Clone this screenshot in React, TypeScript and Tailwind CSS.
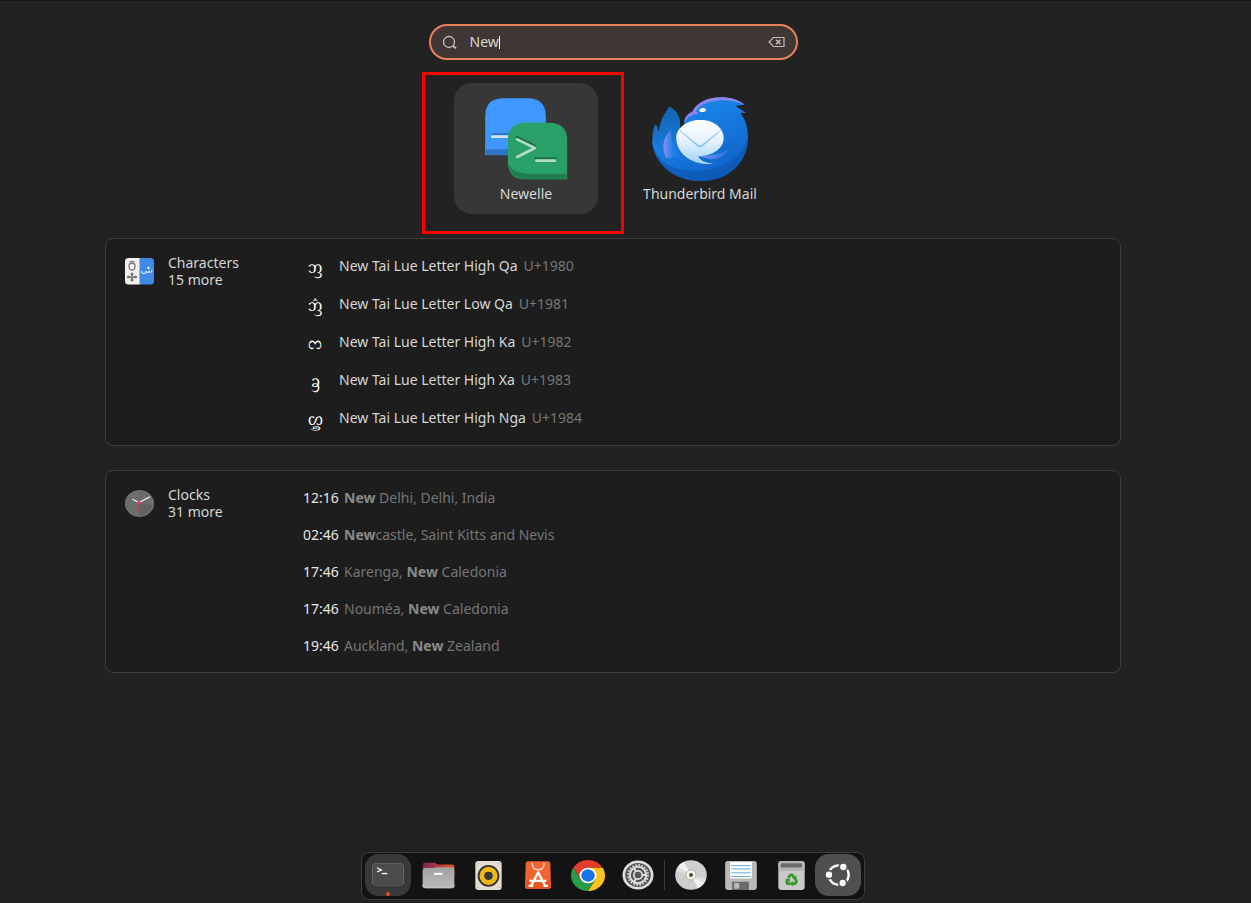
import type { ReactNode } from "react";
import { clsx } from "clsx";

const characters = [
  { glyph: "ᦀ", name: "New Tai Lue Letter High Qa", code: "U+1980" },
  { glyph: "ᦁ", name: "New Tai Lue Letter Low Qa", code: "U+1981" },
  { glyph: "ᦂ", name: "New Tai Lue Letter High Ka", code: "U+1982" },
  { glyph: "ᦃ", name: "New Tai Lue Letter High Xa", code: "U+1983" },
  { glyph: "ᦄ", name: "New Tai Lue Letter High Nga", code: "U+1984" },
];

const clocks = [
  { time: "12:16", before: "", after: " Delhi, Delhi, India" },
  { time: "02:46", before: "", after: "castle, Saint Kitts and Nevis" },
  { time: "17:46", before: "Karenga, ", after: " Caledonia" },
  { time: "17:46", before: "Nouméa, ", after: " Caledonia" },
  { time: "19:46", before: "Auckland, ", after: " Zealand" },
];

function NewelleIcon() {
  return (
    <svg viewBox="210 99 248 246" className="h-[82px] w-[83px]" aria-hidden="true">
      <path d="M210 270V155q0-55 55-55h72q55 0 55 55v115z" fill="#3f98ff" />
      <path d="M212 253h100v18H212z" fill="#2f74c4" />
      <path d="M229 208h60" stroke="#2f74c4" strokeWidth="7" />
      <path d="M231 215h60" stroke="#cfe3fb" strokeWidth="8" strokeLinecap="round" />
      <path d="M278 289v-62q0-54 54-54h70q54 0 54 54v116H332q-54 0-54-54z" fill="#28a067" />
      <path d="M280 300q8 43 54 43h121v-17H334q-38 0-54-26z" fill="#1f7d50" />
      <path d="M305 216l56 27" stroke="#1b6f47" strokeWidth="7" strokeLinecap="round" />
      <path d="M362 280h58" stroke="#1b6f47" strokeWidth="7" strokeLinecap="round" />
      <path d="M306 223l53 26-53 27" fill="none" stroke="#b3dcc8" strokeWidth="8" strokeLinecap="round" strokeLinejoin="round" />
      <path d="M364 287h55" stroke="#b3dcc8" strokeWidth="8" strokeLinecap="round" />
    </svg>
  );
}

function ThunderbirdIcon() {
  return (
    <svg viewBox="50 50 288 252" className="h-[84px] w-24" aria-hidden="true">
      <defs>
        <linearGradient id="tb-body" x1="0" y1="0" x2="0.6" y2="1">
          <stop offset="0" stopColor="#1f8df2" />
          <stop offset="0.6" stopColor="#1577de" />
          <stop offset="1" stopColor="#0f62c6" />
        </linearGradient>
        <linearGradient id="tb-tail" x1="0" y1="0" x2="0" y2="1">
          <stop offset="0" stopColor="#1263b4" />
          <stop offset="1" stopColor="#1a80e6" />
        </linearGradient>
        <linearGradient id="tb-bubble" x1="0" y1="0" x2="0" y2="1">
          <stop offset="0" stopColor="#ffffff" />
          <stop offset="0.5" stopColor="#e2f1fe" />
          <stop offset="1" stopColor="#9ed2fb" />
        </linearGradient>
        <linearGradient id="tb-feather" x1="0" y1="0" x2="1" y2="0">
          <stop offset="0" stopColor="#8f8cf0" />
          <stop offset="0.6" stopColor="#1c80e6" />
        </linearGradient>
        <linearGradient id="tb-wing" x1="0" y1="0" x2="1" y2="0">
          <stop offset="0" stopColor="#8791f5" />
          <stop offset="1" stopColor="#1c6fdd" />
        </linearGradient>
      </defs>
      <path d="M60 131q6 6 11 24c2-32 14-51 31-77 22 13 36 33 32 62l7 84-58 20C48 216 45 165 60 131z" fill="url(#tb-tail)" />
      <path d="M147 128c0-18 10-28 24-34 14-28 46-43 86-43 28 0 50 7 71 22l-28 4q15 8 32 21l-18-1c16 17 24 45 24 73 0 76-57 132-141 132-79 0-141-50-147-124l34 40 60-60z" fill="url(#tb-body)" />
      <path d="M50 182c8 57 58 90 128 90 85 0 138-37 160-97-1 71-58 127-140 127S50 251 50 182z" fill="#0b4fa6" opacity="0.5" />
      <path d="M147 128c0-18 10-28 24-34 14-28 46-43 86-43 28 0 50 7 71 22-40-15-70-16-104-8-20 5-34 14-42 27l6 9c-18 1-31 9-41 27z" fill="#8c83ec" />
      <path d="M93 234c-16-31-10-65 14-85 0 30 6 54 26 80z" fill="url(#tb-feather)" />
      <ellipse cx="202" cy="89" rx="10" ry="6" fill="#fff" transform="rotate(-10 202 89)" />
      <path d="M186 226c40 2 72-4 98-23-10 24-34 36-64 32z" fill="url(#tb-wing)" />
      <path d="M195 119c40 0 70 23 70 54 0 28-26 53-76 55 5 12 20 20 46 22-64 8-112-30-112-77 0-31 32-54 72-54z" fill="url(#tb-bubble)" />
      <path d="M133 150l54 43q7 6 14 0l56-43-56 48q-7 6-14 0z" fill="#7db9ee" stroke="#a3cdf2" strokeWidth="3" />
    </svg>
  );
}

function CharactersIcon() {
  return (
    <svg viewBox="0 0 29 27" className="h-[27px] w-[29px]" aria-hidden="true">
      <path d="M3.500 0H15v26.500H3.500Q0 26.500 0 23V3.500Q0 0 3.500 0z" fill="#f3f2f0" />
      <path d="M14.500 0h11Q29 0 29 3.500V23q0 3.500-3.500 3.500h-11z" fill="#3e8ae6" />
      <ellipse cx="7" cy="8.500" rx="3" ry="3.500" fill="none" stroke="#777" strokeWidth="1.300" />
      <path d="M4.500 3.500h5" stroke="#777" strokeWidth="1" />
      <path d="M3 19h8M7 15.500v7" stroke="#777" strokeWidth="1.600" />
      <g fill="#777">
        <circle cx="3.500" cy="19" r="1.600" />
        <circle cx="10.500" cy="19" r="1.600" />
        <circle cx="7" cy="16" r="1.600" />
        <circle cx="7" cy="22" r="1.600" />
      </g>
      <path d="M16.500 13.500q0 2.500 2.500 2.200 2.200-.2 2.200-2.700 0 1.500 1.500 1.500t1.500-1.500q0 1.500 1.400 1.500t1.400-2.500M22.500 10h2M23.500 9v2" fill="none" stroke="#fff" strokeWidth="1" strokeLinecap="round" />
    </svg>
  );
}

function ClocksIcon() {
  return (
    <svg viewBox="0 0 29 27" className="h-[27px] w-[29px]" aria-hidden="true">
      <ellipse cx="14.500" cy="13.500" rx="14.300" ry="13" fill="#6c6c6c" stroke="#7c7c7c" strokeWidth="0.800" />
      <path d="M14 12.500l14 3A14 13 0 0 1 14.500 26z" fill="#626262" />
      <path d="M8 9.500l6 3 10.500-5.500" fill="none" stroke="#f2f2f2" strokeWidth="1.300" strokeLinecap="round" />
      <path d="M14 12v10.500" stroke="#d73347" strokeWidth="1.200" />
      <circle cx="14" cy="12.500" r="1.600" fill="#e63a4f" />
    </svg>
  );
}

function TerminalIcon() {
  return (
    <svg viewBox="50 51 96 76" className="h-[25px] w-8" aria-hidden="true">
      <rect x="51" y="52" width="94" height="74" rx="10" fill="#4b4b4b" stroke="#6a6a6a" strokeWidth="3" />
      <path d="M51 116q0 9 10 9h74q10 0 10-9" fill="none" stroke="#303030" strokeWidth="4" />
      <path d="M65 66l13 6-13 6" fill="none" stroke="#eee" strokeWidth="4" />
      <path d="M79 83h17" stroke="#fff" strokeWidth="4" />
    </svg>
  );
}

function FilesIcon() {
  return (
    <svg viewBox="198 50 100 80" className="h-[27px] w-[33px]" aria-hidden="true">
      <defs>
        <linearGradient id="files-back" x1="0" y1="0" x2="1" y2="0">
          <stop offset="0" stopColor="#7b2454" />
          <stop offset="1" stopColor="#e95420" />
        </linearGradient>
        <linearGradient id="files-front" x1="0" y1="0" x2="0" y2="1">
          <stop offset="0" stopColor="#a2a2a2" />
          <stop offset="1" stopColor="#bababa" />
        </linearGradient>
      </defs>
      <path d="M200 58q0-7 7-7h30q4 0 8 6h44q7 0 7 7v30h-96z" fill="url(#files-back)" />
      <path d="M200 74q0-7 7-7h28q4 0 9-2h45q7 0 7 7v48q0 8-8 8h-80q-8 0-8-8z" fill="url(#files-front)" />
      <path d="M200 118q0 10 8 10h80q8 0 8-10" fill="none" stroke="#d8d8d8" strokeWidth="2" />
      <path d="M235 85h25" stroke="#fff" strokeWidth="6" />
    </svg>
  );
}

function RhythmboxIcon() {
  return (
    <svg viewBox="357 45 80 88" className="h-[29px] w-[27px]" aria-hidden="true">
      <rect x="357" y="45" width="80" height="88" rx="9" fill="#e3ddd2" />
      <circle cx="397" cy="90" r="33" fill="#333" />
      <circle cx="397" cy="90" r="20" fill="none" stroke="#f0b716" strokeWidth="15" />
      <circle cx="397" cy="90" r="12" fill="#37383c" />
      {[[365, 53], [429, 53], [365, 125], [429, 125]].map(([x, y]) => (
        <circle key={`${x}-${y}`} cx={x} cy={y} r="2" fill="#aaa" />
      ))}
    </svg>
  );
}

function AppCenterIcon() {
  return (
    <svg viewBox="42 47 79 84" className="h-7 w-[26px]" aria-hidden="true">
      <path d="M51 47h61q7 0 7 7l2 70q0 7-7 7H49q-7 0-7-7l2-70q0-7 7-7z" fill="#f0652f" />
      <path d="M43 105l78 0v19q0 7-7 7H49q-7 0-7-7z" fill="#e9541f" />
      <path d="M64 53q0 20 18 20t18-20" fill="none" stroke="#fbd6c8" strokeWidth="4" strokeLinecap="round" />
      <path d="M60 124l22-43 22 43M56 107h51M53 122h14M98 122h14" fill="none" stroke="#fff" strokeWidth="7" strokeLinejoin="round" />
    </svg>
  );
}

function ChromeIcon() {
  return (
    <svg viewBox="0 0 48 48" preserveAspectRatio="none" className="h-[31px] w-[34px]" aria-hidden="true">
      <path d="M24 12h20.780A24 24 0 0 0 3.220 12l10.390 18z" fill="#e33b2e" />
      <path d="M34.390 30L24 48A24 24 0 0 0 44.780 12H24z" fill="#fcc31e" />
      <path d="M13.610 30L3.220 12A24 24 0 0 0 24 48l10.390-18z" fill="#2a9b48" />
      <circle cx="24" cy="24" r="12" fill="#fff" />
      <circle cx="24" cy="24" r="9.500" fill="#1a73e8" />
    </svg>
  );
}

function SettingsIcon() {
  return (
    <svg viewBox="0 0 32 30" className="h-[30px] w-8" aria-hidden="true">
      <ellipse cx="16" cy="15" rx="15.500" ry="14.500" fill="#dedede" />
      <ellipse cx="16" cy="15" rx="12.800" ry="12" fill="#555" />
      <circle cx="16" cy="15" r="10" fill="none" stroke="#dcdcdc" strokeWidth="1.800" strokeDasharray="1.600 1.540" />
      <circle cx="16" cy="15" r="8.200" fill="none" stroke="#dcdcdc" strokeWidth="2" />
      <circle cx="16" cy="15" r="4.200" fill="none" stroke="#dcdcdc" strokeWidth="1.800" />
      <path d="M20 15h4M14 11.500l-2-3.500M14 18.500l-2 3.500" stroke="#dcdcdc" strokeWidth="2" />
    </svg>
  );
}

function DiscIcon() {
  return (
    <svg viewBox="0 0 32 30" className="h-[30px] w-8" aria-hidden="true">
      <ellipse cx="16" cy="15" rx="15.800" ry="14.800" fill="#cfcfcf" />
      <path d="M16 15L3 6.500Q5 3.500 9 1.800zM16 15l13 8.500q-2 3-6 4.700z" fill="#f3f3f3" />
      <path d="M16 15L1 11.500 3 6.500zM16 15l15 3.500-2 5z" fill="#dedede" />
      <circle cx="16" cy="15" r="5" fill="#f6f3ec" stroke="#b5a98b" strokeWidth="0.800" />
      <circle cx="16" cy="15" r="2" fill="#4c4c4c" />
    </svg>
  );
}

function FloppyIcon() {
  return (
    <svg viewBox="207 45 96 88" className="h-[29px] w-8" aria-hidden="true">
      <path d="M215 45h80q8 0 8 8v71q0 9-9 9h-78q-9 0-9-9V53q0-8 8-8z" fill="#b9b9b9" />
      <path d="M222 48h66v45q0 5-5 5h-56q-5 0-5-5z" fill="#fff" />
      <path d="M225 59h60M225 69h60M225 81h60M225 92h60" stroke="#5cacd3" strokeWidth="3" />
      <path d="M228 108h51v25h-51z" fill="#6b6b6b" />
      <rect x="234" y="112" width="16" height="17" rx="3" fill="#b9b9b9" />
    </svg>
  );
}

function TrashIcon() {
  return (
    <svg viewBox="364 45 80 88" className="h-[29px] w-[27px]" aria-hidden="true">
      <rect x="364" y="45" width="80" height="88" rx="10" fill="#c9c9c9" />
      <rect x="364" y="45" width="80" height="30" rx="10" fill="#b4b4b4" />
      <rect x="371" y="52" width="65" height="13" rx="5" fill="#6b6b6b" />
      <g fill="none" stroke="#2f9a23" strokeWidth="8">
        <path d="M394 96l6-8h7l6 9" />
        <path d="M415 99l4 8-4 7h-8" />
        <path d="M400 114h-8l-3-6 5-8" />
      </g>
      <path d="M406 99l13 2 0-13zM408 105v17l-10-8zM384 102l14-5 2 12z" fill="#2f9a23" />
    </svg>
  );
}

function UbuntuIcon() {
  return (
    <svg viewBox="508 57 76 72" className="h-6 w-[26px]" aria-hidden="true">
      <ellipse cx="548" cy="93" rx="30" ry="29" fill="none" stroke="#fff" strokeWidth="7" />
      <g fill="#fff" stroke="#4f4f4f" strokeWidth="5">
        <circle cx="519" cy="92" r="12" />
        <circle cx="562" cy="69" r="12" />
        <circle cx="560" cy="117" r="12" />
      </g>
    </svg>
  );
}

function AppTile({ name, selected, children }: { name: string; selected?: boolean; children: ReactNode }) {
  return (
    <div className="relative">
      <button
        type="button"
        className={clsx(
          "flex h-[131px] w-36 flex-col items-center rounded-[18px] pt-3.5",
          selected && "bg-[#373737]",
        )}
      >
        <span className="flex h-[84px] items-center">{children}</span>
        <span className="mt-[3px] leading-5">{name}</span>
      </button>
      {selected && (
        <div className="pointer-events-none absolute -top-[11px] -right-[26px] -bottom-5 -left-8 border-3 border-[#fb0000]" />
      )}
    </div>
  );
}

function ResultPanel({ icon, title, more, children }: { icon: ReactNode; title: string; more: string; children: ReactNode }) {
  return (
    <section className="flex rounded-lg border border-[#3c3c3c] bg-[#1d1d1d] py-2 pl-[19px]">
      <div className="flex w-[178px] shrink-0 items-start gap-3.5 pt-[7px]">
        <span className="pt-1">{icon}</span>
        <div className="leading-[17px]">
          <h2>{title}</h2>
          <p>{more}</p>
        </div>
      </div>
      <ul className="min-w-0 flex-1">{children}</ul>
    </section>
  );
}

function DockItem({ label, running, className, children }: { label: string; running?: boolean; className?: string; children: ReactNode }) {
  return (
    <button
      type="button"
      aria-label={label}
      className={clsx("relative flex h-[42px] w-[46px] items-center justify-center rounded-[14px]", className)}
    >
      {children}
      {running && <span className="absolute bottom-0 left-[21px] size-1 rounded-full bg-[#e2501b]" />}
    </button>
  );
}

export default function App() {
  return (
    <div className="flex min-h-screen flex-col items-center border-t border-[#141414] bg-[#222222] pr-[25px] pb-[3px] font-['Noto_Sans',sans-serif] text-sm text-[#d6d6d6]">
      <label className="mt-[23px] flex h-9 w-[369px] items-center rounded-full border-2 border-[#e9805c] bg-[#403633] px-[11px]">
        <svg viewBox="0 0 16 16" className="size-4 text-[#c4bfbd]" fill="none" stroke="currentColor" strokeWidth="1.300" aria-hidden="true">
          <circle cx="7" cy="8" r="5.500" />
          <path d="M11 12l3 2.300" strokeWidth="2" />
        </svg>
        <input
          type="text"
          aria-label="Search"
          defaultValue="New"
          className="ml-3 field-sizing-content caret-transparent outline-none"
        />
        <span className="h-[13px] w-px bg-white" />
        <button type="button" aria-label="Clear search" className="ml-auto">
          <svg viewBox="0 0 17 12" className="h-3 w-[17px] text-[#c4bfbd]" fill="none" stroke="currentColor" strokeWidth="1.200" aria-hidden="true">
            <path d="M5.500 1.500h10.500v9H5.500L1 6z" />
            <path d="M8 3.800l4.500 4.400M12.500 3.800L8 8.200" strokeWidth="1.500" />
          </svg>
        </button>
      </label>

      <div className="mt-[23px] flex gap-[30px]">
        <AppTile name="Newelle" selected>
          <NewelleIcon />
        </AppTile>
        <AppTile name="Thunderbird Mail">
          <ThunderbirdIcon />
        </AppTile>
      </div>

      <main className="mt-6 flex w-full max-w-[1016px] flex-col gap-6">
        <ResultPanel icon={<CharactersIcon />} title="Characters" more="15 more">
          {characters.map(({ glyph, name, code }) => (
            <li key={code}>
              <button type="button" className="flex h-[38px] w-full items-center text-left">
                <span className="w-6 text-center text-lg text-white">{glyph}</span>
                <span className="ml-3">{name}</span>
                <span className="ml-1.5 text-[#757575]">{code}</span>
              </button>
            </li>
          ))}
        </ResultPanel>

        <ResultPanel icon={<ClocksIcon />} title="Clocks" more="31 more">
          {clocks.map(({ time, before, after }) => (
            <li key={before + after}>
              <button type="button" className="flex h-[37px] w-full items-center text-left">
                <span className="w-[41px] text-[#e6e6e6]">{time}</span>
                <span className="whitespace-pre text-[#757575]">
                  {before}
                  <b className="text-[#8a8a8a]">New</b>
                  {after}
                </span>
              </button>
            </li>
          ))}
        </ResultPanel>
      </main>

      <nav aria-label="Dock" className="mt-auto flex items-center gap-1 rounded-lg border border-[#3c3c3c] bg-[#131313] px-[3px] pt-px pb-[3px]">
        <DockItem label="Terminal" running className="bg-[#393939]">
          <TerminalIcon />
        </DockItem>
        <DockItem label="Files">
          <FilesIcon />
        </DockItem>
        <DockItem label="Rhythmbox">
          <RhythmboxIcon />
        </DockItem>
        <DockItem label="App Center">
          <AppCenterIcon />
        </DockItem>
        <DockItem label="Google Chrome">
          <ChromeIcon />
        </DockItem>
        <DockItem label="Settings">
          <SettingsIcon />
        </DockItem>
        <span className="-mx-px h-[30px] w-px bg-[#3c3c3c]" />
        <DockItem label="Disc">
          <DiscIcon />
        </DockItem>
        <DockItem label="Floppy">
          <FloppyIcon />
        </DockItem>
        <DockItem label="Trash">
          <TrashIcon />
        </DockItem>
        <DockItem label="Show Applications" className="-ml-[3px] bg-[#4f4f4f]">
          <UbuntuIcon />
        </DockItem>
      </nav>
    </div>
  );
}
